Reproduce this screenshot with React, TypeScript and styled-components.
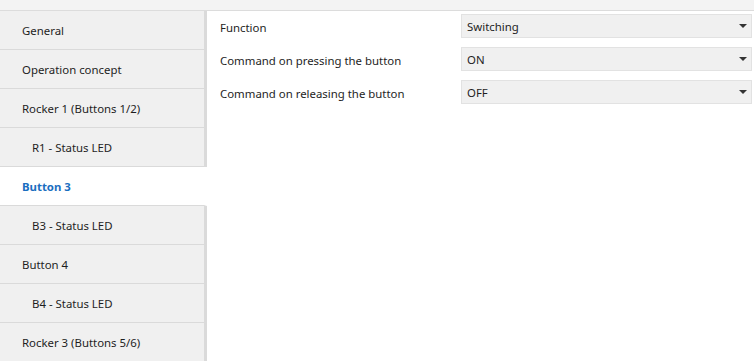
import styled, { createGlobalStyle } from "styled-components";

const GlobalStyle = createGlobalStyle`
    html, body {
        margin: 0;
        padding: 0;
        background: #fff;
        font-family: "Segoe UI", "Noto Sans", "Open Sans", sans-serif;
        font-size: 11.4px;
        color: #1e1e1e;
    }
`;

interface NavItem {
    label: string;
    sub?: boolean;
    active?: boolean;
}

const navItems: NavItem[] = [
    { label: "General" },
    { label: "Operation concept" },
    { label: "Rocker 1 (Buttons 1/2)" },
    { label: "R1 - Status LED", sub: true },
    { label: "Button 3", active: true },
    { label: "B3 - Status LED", sub: true },
    { label: "Button 4" },
    { label: "B4 - Status LED", sub: true },
    { label: "Rocker 3 (Buttons 5/6)" },
];

const params = [
    { label: "Function", value: "Switching" },
    { label: "Command on pressing the button", value: "ON" },
    { label: "Command on releasing the button", value: "OFF" },
];

const Arrow = () => (
    <svg width="8" height="4" viewBox="0 0 8 4">
        <path d="M0 0 L8 0 L4 4 Z" fill="#333" />
    </svg>
);

const App = () => {
    return (
        <>
            <GlobalStyle />
            <Page>
                <TopBar />
                <Body>
                    <Sidebar>
                        {navItems.map((item) => (
                            <NavRow key={item.label} $sub={item.sub} $active={item.active}>
                                {item.label}
                            </NavRow>
                        ))}
                    </Sidebar>
                    <Content>
                        {params.map((p) => (
                            <ParamRow key={p.label}>
                                <ParamLabel>{p.label}</ParamLabel>
                                <Select>
                                    <span>{p.value}</span>
                                    <Arrow />
                                </Select>
                            </ParamRow>
                        ))}
                    </Content>
                </Body>
            </Page>
        </>
    );
};

const Page = styled.div`
    width: 754px;
    height: 361px;
    overflow: hidden;
    display: flex;
    flex-direction: column;
`;

const TopBar = styled.div`
    height: 10px;
    background: #f3f3f3;
    border-bottom: 1px solid #dcdcdc;
    flex-shrink: 0;
`;

const Body = styled.div`
    flex: 1;
    display: flex;
    min-height: 0;
`;

const Sidebar = styled.div`
    width: 207px;
    flex-shrink: 0;
    display: flex;
    flex-direction: column;
`;

const NavRow = styled.div<{ $sub?: boolean; $active?: boolean }>`
    height: 38px;
    flex-shrink: 0;
    display: flex;
    align-items: center;
    padding-left: ${(p) => (p.$sub ? "32px" : "22px")};
    background: ${(p) => (p.$active ? "#fff" : "#f0f0f0")};
    border-bottom: 1px solid #dadada;
    border-right: 3px solid ${(p) => (p.$active ? "#fff" : "#dadada")};
    color: ${(p) => (p.$active ? "#1a6ec0" : "#1e1e1e")};
    font-weight: ${(p) => (p.$active ? 700 : 400)};
    white-space: nowrap;
`;

const Content = styled.div`
    flex: 1;
    padding: 3px 2px 0 13px;
    display: flex;
    flex-direction: column;
    gap: 9px;
`;

const ParamRow = styled.div`
    display: flex;
    align-items: center;
    height: 24px;
`;

const ParamLabel = styled.div`
    width: 241px;
    flex-shrink: 0;
    padding-top: 2px;
`;

const Select = styled.div`
    flex: 1;
    height: 24px;
    box-sizing: border-box;
    background: #f0f0f0;
    border: 1px solid #e2e2e2;
    display: flex;
    align-items: center;
    justify-content: space-between;
    padding: 0 4px 0 5px;
`;

export default App;
